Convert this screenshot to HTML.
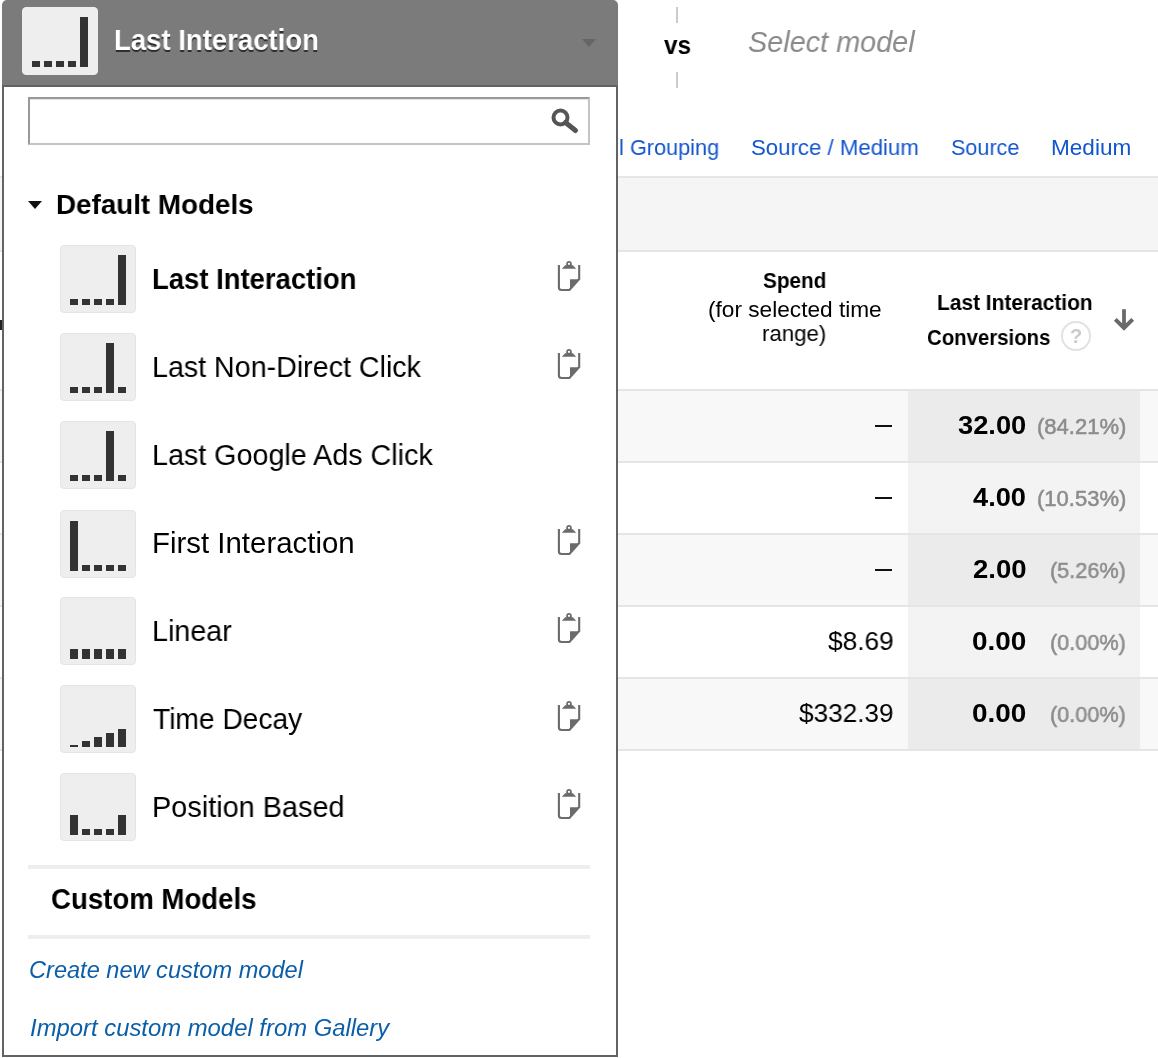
<!DOCTYPE html>
<html><head><meta charset="utf-8"><title>Model Comparison Tool</title>
<style>
html,body{margin:0;padding:0;}
body{width:1158px;height:1058px;position:relative;overflow:hidden;background:#fff;font-family:"Liberation Sans",sans-serif;}
.a{position:absolute;}
.t{position:absolute;white-space:nowrap;line-height:1;transform-origin:0 0;display:block;will-change:transform;}
.ib{position:absolute;width:76px;height:68px;background:#eee;border-radius:4px;box-sizing:border-box;border:1px solid #e4e4e4;left:60px;}
.ib i{position:absolute;background:#333;width:8px;display:block;}
.row{position:absolute;left:0;width:1158px;height:70px;border-top:2px solid #e5e5e5;}
.odd{background:#f8f8f8;}
.dk{position:absolute;left:908px;width:232px;top:0;height:70px;}
.odd .dk{background:#ebebeb;}
.even .dk{background:#f3f3f3;}
.dash{position:absolute;left:875px;width:17px;height:2px;background:#111;}
</style></head><body>

<!-- underlying page -->
<div class="a" style="left:676px;top:7px;width:2px;height:16px;background:#ccc"></div>
<div class="a" style="left:676px;top:72px;width:2px;height:16px;background:#ccc"></div>
<div class="a" style="left:0;top:176px;width:1158px;height:72px;background:#f5f5f5;border-top:2px solid #e6e6e6;border-bottom:2px solid #e6e6e6"></div>

<div class="row odd" style="top:389px"><div class="dk"></div></div>
<div class="row even" style="top:461px"><div class="dk"></div></div>
<div class="row odd" style="top:533px"><div class="dk"></div></div>
<div class="row even" style="top:605px"><div class="dk"></div></div>
<div class="row odd" style="top:677px"><div class="dk"></div></div>
<div class="a" style="left:0;top:749px;width:1158px;height:2px;background:#e5e5e5"></div>
<div class="dash" style="top:425px"></div>
<div class="dash" style="top:497px"></div>
<div class="dash" style="top:569px"></div>

<div class="a" style="left:0;top:320px;width:2px;height:10px;background:#222"></div>
<!-- help circle -->
<div class="a" style="left:1061px;top:321px;width:25.5px;height:25.5px;border:2px solid #e2e2e2;border-radius:50%;"></div>
<!-- sort arrow -->
<svg class="a" style="left:1110px;top:305px" width="28" height="28" viewBox="0 0 28 28"><path d="M14 4.2 V22" fill="none" stroke="#6a6a6a" stroke-width="3.8"/><path d="M5.3 14.3 L14 23 L22.7 14.3" fill="none" stroke="#6a6a6a" stroke-width="4" stroke-linecap="butt" stroke-linejoin="miter"/></svg>

<!-- dropdown panel -->
<div class="a" id="panel" style="left:2px;top:85px;width:612px;height:970px;background:#fff;border:2px solid #636363;border-top:none"></div>
<div class="a" id="hdr" style="left:2px;top:0;width:616px;height:85px;background:#7b7b7b;border-radius:5px 5px 0 0;border-bottom:2px solid #636363;"></div>
<!-- header icon -->
<div class="ib" style="left:22px;top:7px;border-color:#eee"><i style="left:9px;top:53px;height:6px"></i><i style="left:21px;top:53px;height:6px"></i><i style="left:33px;top:53px;height:6px"></i><i style="left:45px;top:53px;height:6px"></i><i style="left:57px;top:9px;height:50px"></i></div>
<div class="a" style="left:582px;top:39px;width:0;height:0;border-left:7px solid transparent;border-right:7px solid transparent;border-top:8px solid #666"></div>

<!-- search -->
<div class="a" style="left:28px;top:97px;width:558px;height:44px;border:2px solid #c4c4c4;border-top-color:#999;border-left-color:#999;background:#fff;box-shadow:inset 0 1px 1px #e4e4e4"></div>
<svg class="a" style="left:548px;top:105px" width="34" height="32" viewBox="0 0 34 32"><circle cx="12.5" cy="12.5" r="7" fill="none" stroke="#555" stroke-width="4"/><path d="M17.5 17.5 L27.5 25.5" stroke="#555" stroke-width="5" stroke-linecap="round"/></svg>

<!-- default models -->
<div class="a" style="left:28px;top:201px;width:0;height:0;border-left:7px solid transparent;border-right:7px solid transparent;border-top:8px solid #111"></div>

<div class="ib" style="top:245px"><i style="left:9px;top:53px;height:6px"></i><i style="left:21px;top:53px;height:6px"></i><i style="left:33px;top:53px;height:6px"></i><i style="left:45px;top:53px;height:6px"></i><i style="left:57px;top:9px;height:50px"></i></div>
<div class="ib" style="top:333px"><i style="left:9px;top:53px;height:6px"></i><i style="left:21px;top:53px;height:6px"></i><i style="left:33px;top:53px;height:6px"></i><i style="left:45px;top:9px;height:50px"></i><i style="left:57px;top:53px;height:6px"></i></div>
<div class="ib" style="top:421px"><i style="left:9px;top:53px;height:6px"></i><i style="left:21px;top:53px;height:6px"></i><i style="left:33px;top:53px;height:6px"></i><i style="left:45px;top:9px;height:50px"></i><i style="left:57px;top:53px;height:6px"></i></div>
<div class="ib" style="top:509.5px"><i style="left:9px;top:10px;height:50px"></i><i style="left:21px;top:54px;height:6px"></i><i style="left:33px;top:54px;height:6px"></i><i style="left:45px;top:54px;height:6px"></i><i style="left:57px;top:54px;height:6px"></i></div>
<div class="ib" style="top:597px"><i style="left:9px;top:51px;height:10px"></i><i style="left:21px;top:51px;height:10px"></i><i style="left:33px;top:51px;height:10px"></i><i style="left:45px;top:51px;height:10px"></i><i style="left:57px;top:51px;height:10px"></i></div>
<div class="ib" style="top:685px"><i style="left:9px;top:59px;height:2px"></i><i style="left:21px;top:55px;height:6px"></i><i style="left:33px;top:51px;height:10px"></i><i style="left:45px;top:47px;height:14px"></i><i style="left:57px;top:43px;height:18px"></i></div>
<div class="ib" style="top:773px"><i style="left:9px;top:41px;height:20px"></i><i style="left:21px;top:55px;height:6px"></i><i style="left:33px;top:55px;height:6px"></i><i style="left:45px;top:55px;height:6px"></i><i style="left:57px;top:41px;height:20px"></i></div>

<!-- clipboard icons -->
<svg class="a" style="left:557px;top:260px" width="26" height="32" viewBox="0 0 26 32">
<path d="M1.9 5 V27.5 Q1.9 30 4.4 30 H12.4 L22.2 19 V5" fill="none" stroke="#6b6b6b" stroke-width="2.1"/>
<path d="M13 19.3 H22.3 L13 29.8 Z" fill="#6b6b6b"/>
<path d="M4.8 8.8 L8.2 5.2 H9.2 V4.2 Q9.2 0.9 12 0.9 Q14.8 0.9 14.8 4.2 V5.2 H15.8 L19.2 8.8 Z" fill="#6b6b6b"/>
<circle cx="12" cy="3.8" r="1.15" fill="#fff"/>
</svg>
<svg class="a" style="left:557px;top:348px" width="26" height="32" viewBox="0 0 26 32">
<path d="M1.9 5 V27.5 Q1.9 30 4.4 30 H12.4 L22.2 19 V5" fill="none" stroke="#6b6b6b" stroke-width="2.1"/>
<path d="M13 19.3 H22.3 L13 29.8 Z" fill="#6b6b6b"/>
<path d="M4.8 8.8 L8.2 5.2 H9.2 V4.2 Q9.2 0.9 12 0.9 Q14.8 0.9 14.8 4.2 V5.2 H15.8 L19.2 8.8 Z" fill="#6b6b6b"/>
<circle cx="12" cy="3.8" r="1.15" fill="#fff"/>
</svg>
<svg class="a" style="left:557px;top:524px" width="26" height="32" viewBox="0 0 26 32">
<path d="M1.9 5 V27.5 Q1.9 30 4.4 30 H12.4 L22.2 19 V5" fill="none" stroke="#6b6b6b" stroke-width="2.1"/>
<path d="M13 19.3 H22.3 L13 29.8 Z" fill="#6b6b6b"/>
<path d="M4.8 8.8 L8.2 5.2 H9.2 V4.2 Q9.2 0.9 12 0.9 Q14.8 0.9 14.8 4.2 V5.2 H15.8 L19.2 8.8 Z" fill="#6b6b6b"/>
<circle cx="12" cy="3.8" r="1.15" fill="#fff"/>
</svg>
<svg class="a" style="left:557px;top:612px" width="26" height="32" viewBox="0 0 26 32">
<path d="M1.9 5 V27.5 Q1.9 30 4.4 30 H12.4 L22.2 19 V5" fill="none" stroke="#6b6b6b" stroke-width="2.1"/>
<path d="M13 19.3 H22.3 L13 29.8 Z" fill="#6b6b6b"/>
<path d="M4.8 8.8 L8.2 5.2 H9.2 V4.2 Q9.2 0.9 12 0.9 Q14.8 0.9 14.8 4.2 V5.2 H15.8 L19.2 8.8 Z" fill="#6b6b6b"/>
<circle cx="12" cy="3.8" r="1.15" fill="#fff"/>
</svg>
<svg class="a" style="left:557px;top:700px" width="26" height="32" viewBox="0 0 26 32">
<path d="M1.9 5 V27.5 Q1.9 30 4.4 30 H12.4 L22.2 19 V5" fill="none" stroke="#6b6b6b" stroke-width="2.1"/>
<path d="M13 19.3 H22.3 L13 29.8 Z" fill="#6b6b6b"/>
<path d="M4.8 8.8 L8.2 5.2 H9.2 V4.2 Q9.2 0.9 12 0.9 Q14.8 0.9 14.8 4.2 V5.2 H15.8 L19.2 8.8 Z" fill="#6b6b6b"/>
<circle cx="12" cy="3.8" r="1.15" fill="#fff"/>
</svg>
<svg class="a" style="left:557px;top:788px" width="26" height="32" viewBox="0 0 26 32">
<path d="M1.9 5 V27.5 Q1.9 30 4.4 30 H12.4 L22.2 19 V5" fill="none" stroke="#6b6b6b" stroke-width="2.1"/>
<path d="M13 19.3 H22.3 L13 29.8 Z" fill="#6b6b6b"/>
<path d="M4.8 8.8 L8.2 5.2 H9.2 V4.2 Q9.2 0.9 12 0.9 Q14.8 0.9 14.8 4.2 V5.2 H15.8 L19.2 8.8 Z" fill="#6b6b6b"/>
<circle cx="12" cy="3.8" r="1.15" fill="#fff"/>
</svg>

<!-- separators -->
<div class="a" style="left:28px;top:865px;width:562px;height:4px;background:#eee"></div>
<div class="a" style="left:28px;top:935px;width:562px;height:4px;background:#eee"></div>

<span class="t" style="left:113.60px;top:26.45px;font-size:29px;color:#fff;transform:scaleX(0.9487);font-weight:bold;text-shadow:0 2px 0 #2e2e2e;">Last Interaction</span>
<span class="t" style="left:663.91px;top:31.69px;font-size:26px;color:#000;transform:scaleX(0.9353);font-weight:bold;">vs</span>
<span class="t" style="left:748.00px;top:27.65px;font-size:29px;color:#8a8a8a;transform:scaleX(0.9940);font-style:italic;">Select model</span>
<span class="t" style="left:619.14px;top:137.32px;font-size:22.3px;color:#1155cc;transform:scaleX(0.9740);">l Grouping</span>
<span class="t" style="left:750.80px;top:137.32px;font-size:22.3px;color:#1155cc;transform:scaleX(0.9958);">Source / Medium</span>
<span class="t" style="left:951.33px;top:137.32px;font-size:22.3px;color:#1155cc;transform:scaleX(0.9680);">Source</span>
<span class="t" style="left:1050.68px;top:137.32px;font-size:22.3px;color:#1155cc;transform:scaleX(1.0118);">Medium</span>
<span class="t" style="left:763.03px;top:269.88px;font-size:22px;color:#000;transform:scaleX(0.9433);font-weight:bold;">Spend</span>
<span class="t" style="left:707.59px;top:299.15px;font-size:22.5px;color:#000;transform:scaleX(1.0065);">(for selected time</span>
<span class="t" style="left:761.52px;top:323.25px;font-size:22.5px;color:#000;transform:scaleX(0.9887);">range)</span>
<span class="t" style="left:937.17px;top:291.88px;font-size:22px;color:#000;transform:scaleX(0.9503);font-weight:bold;">Last Interaction</span>
<span class="t" style="left:927.17px;top:326.78px;font-size:22px;color:#000;transform:scaleX(0.9262);font-weight:bold;">Conversions</span>
<span class="t" style="left:958.38px;top:412.07px;font-size:26.5px;color:#000;transform:scaleX(1.0294);font-weight:bold;">32.00</span>
<span class="t" style="left:1036.81px;top:415.88px;font-size:22px;color:#8c8c8c;transform:scaleX(0.9954);-webkit-text-stroke:0.55px #8c8c8c;">(84.21%)</span>
<span class="t" style="left:973.09px;top:484.07px;font-size:26.5px;color:#000;transform:scaleX(1.0279);font-weight:bold;">4.00</span>
<span class="t" style="left:1036.89px;top:487.88px;font-size:22px;color:#8c8c8c;transform:scaleX(0.9945);-webkit-text-stroke:0.55px #8c8c8c;">(10.53%)</span>
<span class="t" style="left:972.57px;top:556.07px;font-size:26.5px;color:#000;transform:scaleX(1.0383);font-weight:bold;">2.00</span>
<span class="t" style="left:1049.90px;top:559.88px;font-size:22px;color:#8c8c8c;transform:scaleX(0.9828);-webkit-text-stroke:0.55px #8c8c8c;">(5.26%)</span>
<span class="t" style="left:972.45px;top:628.07px;font-size:26.5px;color:#000;transform:scaleX(1.0525);font-weight:bold;">0.00</span>
<span class="t" style="left:1049.90px;top:631.88px;font-size:22px;color:#8c8c8c;transform:scaleX(0.9828);-webkit-text-stroke:0.55px #8c8c8c;">(0.00%)</span>
<span class="t" style="left:827.94px;top:628.07px;font-size:26.5px;color:#000;transform:scaleX(0.9917);">$8.69</span>
<span class="t" style="left:972.45px;top:700.07px;font-size:26.5px;color:#000;transform:scaleX(1.0525);font-weight:bold;">0.00</span>
<span class="t" style="left:1049.90px;top:703.88px;font-size:22px;color:#8c8c8c;transform:scaleX(0.9828);-webkit-text-stroke:0.55px #8c8c8c;">(0.00%)</span>
<span class="t" style="left:799.10px;top:700.07px;font-size:26.5px;color:#000;transform:scaleX(0.9873);">$332.39</span>
<span class="t" style="left:152.10px;top:264.95px;font-size:29px;color:#000;transform:scaleX(0.9467);font-weight:bold;">Last Interaction</span>
<span class="t" style="left:151.53px;top:352.95px;font-size:29px;color:#000;transform:scaleX(0.9874);">Last Non-Direct Click</span>
<span class="t" style="left:151.52px;top:440.95px;font-size:29px;color:#000;transform:scaleX(0.9897);">Last Google Ads Click</span>
<span class="t" style="left:152.01px;top:528.95px;font-size:29px;color:#000;transform:scaleX(1.0141);">First Interaction</span>
<span class="t" style="left:151.52px;top:616.95px;font-size:29px;color:#000;transform:scaleX(0.9897);">Linear</span>
<span class="t" style="left:152.84px;top:704.95px;font-size:29px;color:#000;transform:scaleX(0.9717);">Time Decay</span>
<span class="t" style="left:151.51px;top:792.95px;font-size:29px;color:#000;transform:scaleX(0.9955);">Position Based</span>
<span class="t" style="left:56.15px;top:189.77px;font-size:28.5px;color:#000;transform:scaleX(0.9749);font-weight:bold;">Default Models</span>
<span class="t" style="left:50.96px;top:884.65px;font-size:29px;color:#000;transform:scaleX(0.9518);font-weight:bold;">Custom Models</span>
<span class="t" style="left:29.40px;top:958.81px;font-size:23.5px;color:#0b5ea8;transform:scaleX(1.0033);font-style:italic;">Create new custom model</span>
<span class="t" style="left:29.79px;top:1016.81px;font-size:23.5px;color:#0b5ea8;transform:scaleX(1.0150);font-style:italic;">Import custom model from Gallery</span>
<span class="t" style="left:1070.2px;top:325.8px;font-size:20px;font-weight:bold;color:#cbcbcb;">?</span>
</body></html>
